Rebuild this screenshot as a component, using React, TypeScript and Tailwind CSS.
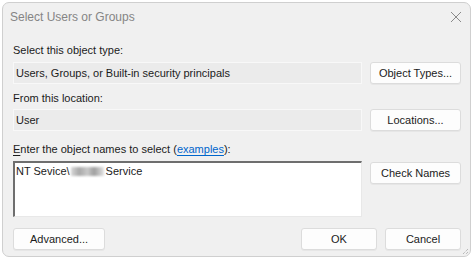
import React from 'react'

const font = { fontFamily: '"Liberation Sans", Arial, sans-serif' }

function Btn({ children, className = '' }: { children: React.ReactNode; className?: string }) {
  return (
    <div
      className={`flex h-[22px] items-center justify-center rounded-[3px] border border-[#dcdcdc] bg-[#fdfdfd] text-[11px] text-[#1b1b1b] shadow-[0_1px_0_rgba(0,0,0,0.04)] ${className}`}
    >
      {children}
    </div>
  )
}

export default function App() {
  return (
    <div className="h-[260px] w-[474px] overflow-hidden bg-white pl-[2px] pt-[2px]" style={font}>
      <div className="relative flex h-[255px] w-[469px] flex-col rounded-[7px] border border-[#cfcfcf] bg-[#f0f0f0]">
        {/* Title bar */}
        <div className="flex h-[27px] items-center justify-between pl-[7px] pr-[8px]">
          <span className="text-[12px] text-[#858585]">Select Users or Groups</span>
          <svg width="12" height="12" viewBox="0 0 12 12" className="mt-[1px]">
            <path d="M1 1 L11 11 M11 1 L1 11" stroke="#8a8a8a" strokeWidth="1" />
          </svg>
        </div>

        {/* Body */}
        <div className="flex flex-col pl-[10px] pr-[9px] pt-[12px] text-[11px] text-[#1b1b1b]">
          <div className="h-[16px] leading-[16px]">Select this object type:</div>
          <div className="mt-[4px] flex gap-[8px]">
            <div className="flex h-[22px] w-[349px] items-center border border-[#f8f8f8] bg-[#ebebeb] pl-[2px]">
              Users, Groups, or Built-in security principals
            </div>
            <Btn className="w-[91px]">Object Types...</Btn>
          </div>

          <div className="mt-[6px] h-[16px] leading-[16px]">From this location:</div>
          <div className="mt-[3px] flex gap-[8px]">
            <div className="flex h-[22px] w-[349px] items-center border border-[#f8f8f8] bg-[#ebebeb] pl-[2px]">
              User
            </div>
            <Btn className="w-[91px]">Locations...</Btn>
          </div>

          <div className="mt-[10px] h-[16px] leading-[16px]">
            <span className="underline underline-offset-2">E</span>nter the object names to select (
            <span className="text-[#0066cc] underline underline-offset-2">examples</span>):
          </div>
          <div className="mt-[4px] flex gap-[8px]">
            <div className="h-[56px] w-[349px] border-l-[2px] border-t-[2px] border-r border-b border-l-[#6e6e6e] border-t-[#6e6e6e] border-r-[#e8e8e8] border-b-[#e8e8e8] bg-white pl-[1px] leading-[16px]">
              <span className="inline-flex items-center">
                NT Sevice\
                <span className="ml-[1px] mr-[2px] inline-block h-[9px] w-[33px] bg-[linear-gradient(90deg,#d8d8d8,#a9a9a9_25%,#c9c9c9_50%,#9f9f9f_70%,#e4e4e4)] blur-[1px]" />
                Service
              </span>
            </div>
            <Btn className="mt-[1px] w-[91px]">Check Names</Btn>
          </div>

          <div className="mt-[11px] flex items-center">
            <Btn className="w-[92px]">Advanced...</Btn>
            <div className="flex-1" />
            <Btn className="w-[76px]">OK</Btn>
            <Btn className="ml-[8px] w-[76px]">Cancel</Btn>
          </div>
        </div>

        {/* Resize grip */}
        <svg width="8" height="8" viewBox="0 0 8 8" className="absolute bottom-[1px] right-[1px]">
          <path d="M7 2 L2 7 M7 5 L5 7" stroke="#a0a0a0" strokeWidth="1" strokeDasharray="1 1" />
        </svg>
      </div>
    </div>
  )
}
